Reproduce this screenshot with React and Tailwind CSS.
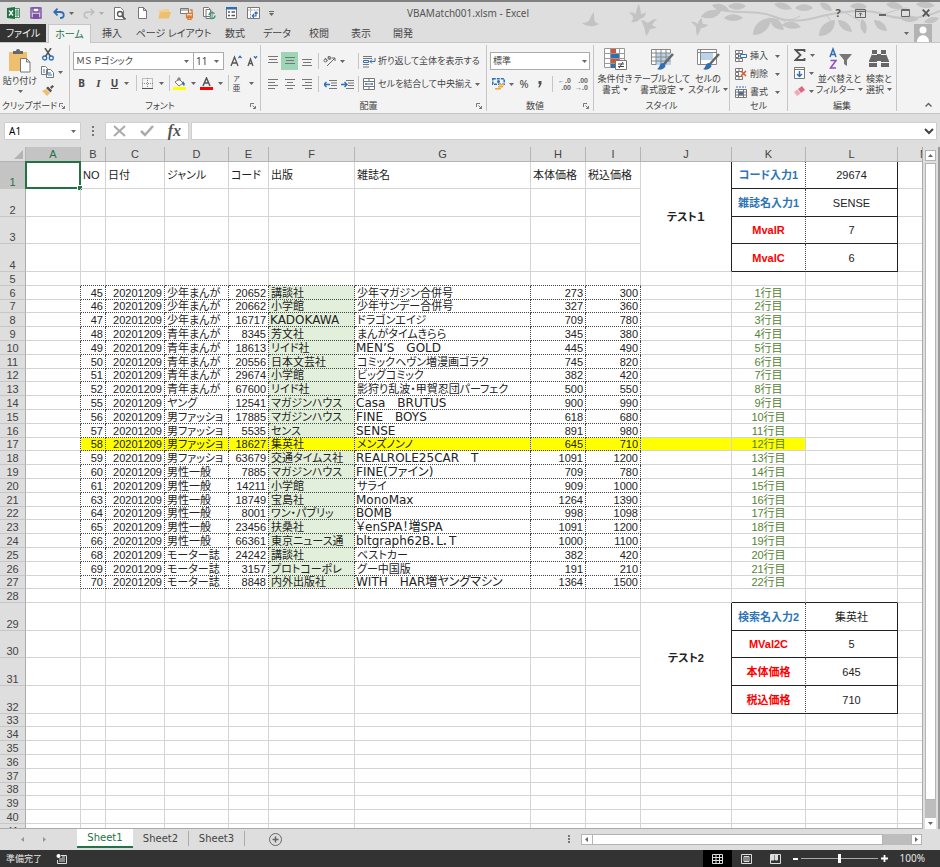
import React, { useState } from 'react';

const COLUMNS = [
    { name: 'A', width: 'w-[55px]' },
    { name: 'B', width: 'w-[25px]' },
    { name: 'C', width: 'w-[59px]' },
    { name: 'D', width: 'w-[64px]' },
    { name: 'E', width: 'w-[40px]' },
    { name: 'F', width: 'w-[86px]' },
    { name: 'G', width: 'w-[176px]' },
    { name: 'H', width: 'w-[55px]' },
    { name: 'I', width: 'w-[55px]' },
    { name: 'J', width: 'w-[91px]' },
    { name: 'K', width: 'w-[74px]' },
    { name: 'L', width: 'w-[92px]' },
    { name: 'M', width: '' },
];

const HEADINGS = {
    B: 'NO', C: '日付', D: 'ジャンル', E: 'コード', F: '出版', G: '雑誌名', H: '本体価格', I: '税込価格',
};

// no, genre, code, publisher, title, price, price with tax
const MAGAZINES = [
    [45, '少年まんが', 20652, '講談社', '少年マガジン合併号', 273, 300],
    [46, '少年まんが', 20662, '小学館', '少年サンデー合併号', 327, 360],
    [47, '少年まんが', 16717, 'KADOKAWA', 'ドラゴンエイジ', 709, 780],
    [48, '青年まんが', 8345, '芳文社', 'まんがタイムきらら', 345, 380],
    [49, '青年まんが', 18613, 'リイド社', 'MEN’S　GOLD', 445, 490],
    [50, '青年まんが', 20556, '日本文芸社', 'コミックヘヴン増漫画ゴラク', 745, 820],
    [51, '青年まんが', 29674, '小学館', 'ビッグコミック', 382, 420],
    [52, '青年まんが', 67600, 'リイド社', '影狩り乱波・甲賀忍団パーフェク', 500, 550],
    [55, 'ヤング', 12541, 'マガジンハウス', 'Casa　BRUTUS', 900, 990],
    [56, '男ファッショ', 17885, 'マガジンハウス', 'FINE　BOYS', 618, 680],
    [57, '男ファッショ', 5535, 'センス', 'SENSE', 891, 980],
    [58, '男ファッショ', 18627, '集英社', 'メンズノンノ', 645, 710],
    [59, '男ファッショ', 63679, '交通タイムス社', 'REALROLE25CAR　T', 1091, 1200],
    [60, '男性一般', 7885, 'マガジンハウス', 'FINE(ファイン)', 709, 780],
    [61, '男性一般', 14211, '小学館', 'サライ', 909, 1000],
    [63, '男性一般', 18749, '宝島社', 'MonoMax', 1264, 1390],
    [64, '男性一般', 8001, 'ワン・パブリッ', 'BOMB', 998, 1098],
    [65, '男性一般', 23456, '扶桑社', '￥enSPA！増SPA', 1091, 1200],
    [66, '男性一般', 66361, '東京ニュース通', 'bltgraph62B．L．T', 1000, 1100],
    [68, 'モーター誌', 24242, '講談社', 'ベストカー', 382, 420],
    [69, 'モーター誌', 3157, 'プロトコーポレ', 'グー中国版', 191, 210],
    [70, 'モーター誌', 8848, '内外出版社', 'WITH　HAR増ヤングマシン', 1364, 1500],
];

const RESULTS = {
    1: ['コード入力1', '29674', 'text-[#2e75b6]'],
    2: ['雑誌名入力1', 'SENSE', 'text-[#2e75b6]'],
    3: ['MvalR', '7', 'text-[#ff0000]'],
    4: ['MvalC', '6', 'text-[#ff0000]'],
    29: ['検索名入力2', '集英社', 'text-[#2e75b6]'],
    30: ['MVal2C', '5', 'text-[#ff0000]'],
    31: ['本体価格', '645', 'text-[#ff0000]'],
    32: ['税込価格', '710', 'text-[#ff0000]'],
};

const ROW_COUNT = 41;
const FIRST_DATA_ROW = 6;
const LAST_DATA_ROW = 27;
const HIGHLIGHT_ROW = 17;

const isTall = (row) => row <= 4 || (row >= 29 && row <= 32);

// Rows are 13.8 units high, snapped to whole pixels
const buildRowHeights = () => {
    const heights = [];
    let units = 0;
    for (let row = 1; row <= ROW_COUNT; row++) {
        const next = units + (isTall(row) ? 2 : 1);
        heights[row] = Math.floor(next * 13.8) - Math.floor(units * 13.8);
        units = next;
    }
    return heights;
};

const rowHeights = buildRowHeights();

const getCellValue = (col, row) => {
    if (row === 1 && HEADINGS[col]) return HEADINGS[col];
    if (row >= FIRST_DATA_ROW && row <= LAST_DATA_ROW) {
        const [no, genre, code, publisher, title, price, taxed] = MAGAZINES[row - FIRST_DATA_ROW];
        const values = { B: no, C: 20201209, D: genre, E: code, F: publisher, G: title, H: price, I: taxed, K: `${row - 5}行目` };
        return values[col];
    }
    if (RESULTS[row] && col === 'K') return RESULTS[row][0];
    if (RESULTS[row] && col === 'L') return RESULTS[row][1];
    return null;
};

const getCellClass = (col, row) => {
    const inData = row >= FIRST_DATA_ROW && row <= LAST_DATA_ROW;
    const classes = ['relative whitespace-nowrap border-r border-b p-0'];

    // bottom edge
    if (col >= 'B' && col <= 'I' && row >= 5 && row <= LAST_DATA_ROW) {
        classes.push('[border-bottom-style:dotted] border-b-[#444]');
    } else if ((col === 'K' || col === 'L') && (RESULTS[row] || row === 28)) {
        classes.push('border-b-[#222]');
    } else {
        classes.push('border-b-[#d4d4d4]');
    }

    // right edge
    if (col <= 'I' && inData) {
        classes.push('[border-right-style:dotted] border-r-[#444]');
    } else if (col === 'K' && RESULTS[row]) {
        classes.push('[border-right-style:dotted] border-r-[#444]');
    } else if ((col === 'J' || col === 'L') && RESULTS[row]) {
        classes.push('border-r-[#222]');
    } else {
        classes.push('border-r-[#d4d4d4]');
    }

    if (row === HIGHLIGHT_ROW && col >= 'B' && col <= 'K') {
        classes.push('bg-[#ffff00]');
    } else if (inData && col === 'F') {
        classes.push('bg-[#e2efda]');
    }

    const startsLatin = /^[A-Za-z￥]/.test(getCellValue(col, row) ?? '');

    if (RESULTS[row] && col === 'K') classes.push('text-center font-bold text-[11px]', RESULTS[row][2]);
    else if (RESULTS[row] && col === 'L') classes.push('text-center text-[11px]');
    else if (col === 'K') classes.push('text-center text-[11px] text-[#548235]');
    else if (row === 1) classes.push('pl-[2px] text-left text-[11px]');
    else if ('BCEHI'.includes(col)) classes.push('pr-[2px] text-right text-[11px]');
    else if (startsLatin) classes.push("pl-px text-left text-[12px] font-['DejaVu_Sans','Noto_Sans_CJK_JP',sans-serif]");
    else classes.push('pl-[2px] text-left text-[11px]');

    return classes.join(' ');
};

const Arrow = ({ className = '' }) => (
    <svg className={`shrink-0 ${className}`} width="5" height="3" viewBox="0 0 5 3" aria-hidden="true">
        <path d="M0 0h5L2.5 3z" fill="#666" />
    </svg>
);

const Separator = () => <span className="h-4 w-px shrink-0 bg-[#c6c6c6]" />;

const IconButton = ({ label, children, className = 'w-[17px]' }) => (
    <button type="button" aria-label={label} className={`flex h-[18px] shrink-0 items-center justify-center ${className}`}>
        {children}
    </button>
);

const Group = ({ label, launcher, className, children }) => (
    <section aria-label={label} className={`flex shrink-0 flex-col border-r border-[#c6c6c6] ${className}`}>
        <div className="flex h-[57px]">{children}</div>
        <div className="flex h-[10px] items-center">
            <span className="flex-1 text-center leading-[10px] whitespace-nowrap">{label}</span>
            {launcher && (
                <button type="button" aria-label={`${label}の設定`} className="mr-1">
                    <svg width="6" height="6" viewBox="0 0 6 6" fill="none" stroke="#777">
                        <path d="M.5 4V.5H4M2.500 2.500l3 3M5.500 3v2.500H3" />
                    </svg>
                </button>
            )}
        </div>
    </section>
);

const BigButton = ({ lines, icon, className }) => (
    <button type="button" className={`flex shrink-0 flex-col items-center pt-[2px] whitespace-nowrap ${className}`}>
        {icon}
        <span className="mt-[2px] leading-[11px]">{lines[0]}</span>
        <span className="flex items-center gap-[3px] leading-[11px]">
            {lines[1]}
            <Arrow />
        </span>
    </button>
);

const Lines = ({ rows }) => (
    <svg width="12" height="10" viewBox="0 0 12 10" stroke="#777" aria-hidden="true">
        {rows.map(([x1, x2, y]) => <path key={y} d={`M${x1} ${y}H${x2}`} />)}
    </svg>
);

/* ---------- Title bar ---------- */

const Branches = () => (
    <svg className="pointer-events-none absolute top-0 right-0" width="360" height="40" viewBox="580 2 360 40" fill="#c3c3c3" aria-hidden="true">
        <path d="M582 23c4 0 6-1 8-4 1-3 2-5 4-7 0 4 0 7 1 10 1 1 3 1 4 2-3 1-5 3-9 2-3 0-6-1-8-3z" />
        <path d="M629 13c3-1 5 0 7 1 0-4 1-7 3-10 1 4 2 7 2 10 2 0 4-1 5-2 0 4-3 6-6 7-2 2-5 4-9 3 2-2 2-3 2-5-1-2-2-3-4-4z" />
        <path d="M641 20c3 0 5 2 7 3 2-2 5-4 9-4-2 2-4 4-5 6 2 1 3 2 5 2-3 2-5 2-7 2-1 3-2 5-4 7-1-4-1-6-2-9-1-3-2-5-3-7z" />
        <path d="M691 22c3-1 5 1 7 2 0-3 2-5 4-6 0 3 0 4 1 6 2 0 3 0 5 1-2 2-4 3-7 3-1 3-2 5-4 8-1-4-1-6-1-9-1-2-3-3-5-5z" />
        <g fill="none" stroke="#c6c6c6">
            <path d="M716 8c18 8 36 0 56 8s34 4 50 0 44-8 60-2 38 6 58-3" strokeWidth="2" />
            <path d="M770 15c10 2 16 8 20 10M842 11c8 4 14 8 18 10M800 16c-8 6-24 4-32 2M884 14c8-2 16-6 24-6M826 15c4 4 6 8 8 10" />
        </g>
        <path d="M701 17c3-6 12-9 20-6-3 7-12 9-20 6zM712 5c7-3 14 0 17 5-7 3-14 0-17-5zM728 6c5-4 13-4 18 0-5 5-13 5-18 0zM724 18c5-5 13-5 19 0-6 4-14 4-19 0z" />
        <path d="M753 35c0-10 8-17 18-17 0 10-8 17-18 17zM770 18c8 0 13 5 14 12-9 0-14-5-14-12zM782 25c6-5 14-4 19 2-7 3-14 2-19-2zM774 4c7-3 14-1 18 5-7 2-14 0-18-5z" />
        <path d="M795 8c5-5 13-5 18 0-5 4-13 4-18 0zM820 3c7-1 11 2 12 8-7 0-11-3-12-8zM819 36c0-9 6-15 16-16 0 10-6 16-16 16zM838 20c8 0 13 5 14 12-9-1-13-5-14-12z" />
        <path d="M850 6c5-4 13-4 17 1-6 4-13 3-17-1zM862 19c5 3 6 9 3 15-5-4-6-10-3-15zM874 20c7 0 12 4 13 11-8 0-12-4-13-11zM886 4c6-4 14-2 17 4-7 2-13 1-17-4zM901 19c5-5 13-4 18 0-6 4-13 4-18 0zM916 4c6-4 14-3 19 2-7 3-14 3-19-2zM924 22c4-5 10-6 15-4-3 5-9 7-15 4z" />
    </svg>
);

const QuickAccess = () => (
    <div className="flex items-center pl-1">
        <IconButton label="Excel" className="w-[18px]">
            <svg width="13" height="12" viewBox="0 0 13 12">
                <path d="M7 1.500h5.500v9H7M8 4h4M8 6h4M8 8h4M10 2v8" fill="#fff" stroke="#217346" strokeWidth=".8" />
                <path d="M0 1l8-1v12l-8-1z" fill="#217346" />
                <path d="M2 3.500l4 5M6 3.500l-4 5" stroke="#fff" strokeWidth="1.300" />
            </svg>
        </IconButton>
        <IconButton label="上書き保存" className="ml-[5px] w-[18px]">
            <svg width="12" height="12" viewBox="0 0 12 12" fill="none" stroke="#7b4fa6" strokeWidth="1.400">
                <path d="M1 1h10v10H1z" />
                <path d="M3 1h6v4H3z" fill="#fff" />
                <path d="M3.500 7.500h5V11h-5z" fill="#7b4fa6" />
            </svg>
        </IconButton>
        <IconButton label="元に戻す" className="ml-1 w-[28px] gap-1">
            <svg width="12" height="11" viewBox="0 0 12 11" fill="none" stroke="#2f6eb5" strokeWidth="1.800">
                <path d="M1 4h6c5 0 5 6 0 6M4.500 .7L1.200 4l3.300 3.300" />
            </svg>
            <Arrow />
        </IconButton>
        <IconButton label="やり直し" className="ml-[2px] w-[28px] gap-1">
            <svg width="12" height="11" viewBox="0 0 12 11" fill="none" stroke="#bdbdbd" strokeWidth="1.600">
                <path d="M11 4H5c-5 0-5 6 0 6M7.500 .7L10.800 4 7.500 7.300" />
            </svg>
            <Arrow className="opacity-40" />
        </IconButton>
        <IconButton label="印刷プレビュー" className="ml-[2px] w-[22px]">
            <svg width="12" height="13" viewBox="0 0 12 13" fill="none" stroke="#777">
                <path d="M.5 .5h6l3 3v9h-9z" fill="#fff" />
                <circle cx="6" cy="7" r="2.500" strokeWidth="1.300" stroke="#555" />
                <path d="M8 9l3.500 3.500" strokeWidth="1.600" stroke="#555" />
            </svg>
        </IconButton>
        <IconButton label="新規作成" className="w-[22px]">
            <svg width="9" height="12" viewBox="0 0 9 12" fill="#fff" stroke="#777">
                <path d="M.5 .5h5l3 3v8h-8zM5.500 .5v3h3" />
            </svg>
        </IconButton>
        <IconButton label="開く" className="w-[22px]">
            <svg width="13" height="11" viewBox="0 0 13 11">
                <path d="M1 10V2h4l1-1h5v3" fill="#f3cf8f" />
                <path d="M0 10.500L3 4h10l-2 6.500z" fill="#eebf6f" />
            </svg>
        </IconButton>
        <IconButton label="印刷範囲" className="w-[23px]">
            <svg width="13" height="13" viewBox="0 0 13 13" fill="#fff">
                <path d="M.5 1.500h8v5h-8zM.5 3h8" stroke="#777" />
                <path d="M6.500 6.500h6v4h-6zM8 9h3v3.500H8zM10 3h2v3" stroke="#d97b34" strokeWidth="1.300" />
            </svg>
        </IconButton>
        <IconButton label="更新" className="w-[22px]">
            <svg width="13" height="13" viewBox="0 0 13 13" fill="#fff" stroke="#777">
                <path d="M.5 .5h5l2 2v7h-7zM3 2.500h4l2 2v7H3z" />
                <circle cx="9" cy="8.500" r="3" fill="none" stroke="#3f9c74" strokeWidth="1.400" strokeDasharray="7 2.500" />
            </svg>
        </IconButton>
        <IconButton label="フォーム" className="w-[22px]">
            <svg width="11" height="12" viewBox="0 0 11 12" fill="#fff">
                <path d="M.5 .5h10v11H.5z" stroke="#777" />
                <path d="M0 0h11v2.500H0z" fill="#2f6eb5" />
                <path d="M2 5h2M2 8.500h2M5.500 5H9M5.500 8.500H9" stroke="#555" strokeWidth="1.300" />
            </svg>
        </IconButton>
        <IconButton label="ピボット" className="w-[22px]">
            <svg width="13" height="12" viewBox="0 0 13 12" fill="#fff">
                <path d="M.5 .5h12v11H.5z" stroke="#777" />
                <path d="M.5 3h12M3.500 .5v11" stroke="#999" strokeDasharray="2 1" />
                <path d="M5.500 9h3.500V5M7 7L5.300 9 7 10.800M7.500 6.500L9 5l1.800 1.500" fill="none" stroke="#2f6eb5" strokeWidth="1.200" />
            </svg>
        </IconButton>
        <IconButton label="クイックアクセスのカスタマイズ" className="w-[14px] flex-col gap-px">
            <span className="h-px w-[5px] bg-[#666]" />
            <Arrow />
        </IconButton>
    </div>
);

const TitleBar = () => (
    <header className="flex h-[22px] items-center">
        <div className="flex-1"><QuickAccess /></div>
        <h1 className="text-[10px] text-[#555]">VBAMatch001.xlsm - Excel</h1>
        <div className="relative flex flex-1 justify-end pr-1">
            <IconButton label="ヘルプ" className="w-[22px] text-[11px] font-bold text-[#555]">?</IconButton>
            <IconButton label="リボンの表示オプション" className="w-[22px]">
                <svg width="11" height="9" viewBox="0 0 11 9" fill="none" stroke="#666">
                    <path d="M.5 .5h10v8H.5zM.5 2.500h10M5.500 7.500V4M3.800 5.500L5.500 3.800 7.200 5.500" />
                </svg>
            </IconButton>
            <IconButton label="最小化" className="w-[23px]">
                <span className="mt-1 h-[2px] w-[7px] bg-[#666]" />
            </IconButton>
            <IconButton label="最大化" className="w-[22px]">
                <svg width="9" height="8" viewBox="0 0 9 8" fill="none" stroke="#666">
                    <path d="M.5 .5h8v7h-8zM0 1.500h9" />
                </svg>
            </IconButton>
            <IconButton label="閉じる" className="w-[20px]">
                <svg width="8" height="8" viewBox="0 0 8 8" stroke="#555" strokeWidth="1.800">
                    <path d="M.7 .7l6.600 6.600M7.300 .7L.7 7.300" />
                </svg>
            </IconButton>
        </div>
    </header>
);

const MenuTabs = () => {
    const [active, setActive] = useState('ホーム');
    const tabs = ['挿入', 'ページ レイアウト', '数式', 'データ', '校閲', '表示', '開発'];

    return (
        <nav className="relative flex h-[19px] items-stretch border-b border-[#c6c6c6] text-[10px] text-[#444]">
            <button type="button" className="w-[46px] bg-[#333] text-[#f0f0f0]">ファイル</button>
            <button
                type="button"
                onClick={() => setActive('ホーム')}
                className="-mb-px ml-[2px] w-[43px] border border-b-0 border-[#c6c6c6] bg-[#f3f3f3] text-[#217346]"
            >
                ホーム
            </button>
            {tabs.map((tab) => (
                <button
                    key={tab}
                    type="button"
                    aria-pressed={active === tab}
                    onClick={() => setActive(tab)}
                    className={tab.length > 4 ? 'w-[81px]' : 'w-[42px]'}
                >
                    {tab}
                </button>
            ))}
            <div className="ml-auto flex items-center gap-[5px] pr-2">
                <Arrow />
                <svg width="18" height="18" viewBox="0 0 18 18" role="img" aria-label="アカウント">
                    <path d="M0 0h18v18H0z" fill="#b3b3b3" />
                    <circle cx="9" cy="6" r="3.500" fill="#fff" />
                    <path d="M3 18c0-9 12-9 12 0z" fill="#fff" />
                </svg>
            </div>
        </nav>
    );
};

/* ---------- Ribbon ---------- */

const ClipboardGroup = () => (
    <Group label="クリップボード" launcher className="w-[70px]">
        <button type="button" className="flex w-[40px] flex-col items-center pt-1 whitespace-nowrap">
            <svg width="22" height="24" viewBox="0 0 22 24">
                <path d="M0 3h18v19H0z" fill="#eebf6f" />
                <path d="M4 5V2h3a2 2 0 014 0h3v3z" fill="#666" />
                <path d="M11.500 9.500h6l3.500 3.500v10h-9.500zM17.500 9.500V13H21" fill="#fff" stroke="#777" />
            </svg>
            <span className="mt-[2px] leading-[11px]">貼り付け</span>
            <Arrow className="mt-1" />
        </button>
        <div className="flex flex-col">
            <IconButton label="切り取り" className="w-[15px]">
                <svg width="12" height="13" viewBox="0 0 12 13" fill="none">
                    <path d="M3 0l5.500 8.500M9 0L3.500 8.500" stroke="#555" strokeWidth="1.500" />
                    <circle cx="2.700" cy="10" r="2" stroke="#2f6eb5" strokeWidth="1.300" />
                    <circle cx="9.300" cy="10" r="2" stroke="#2f6eb5" strokeWidth="1.300" />
                </svg>
            </IconButton>
            <IconButton label="コピー" className="w-[24px] gap-1">
                <svg width="13" height="12" viewBox="0 0 13 12" fill="#fff" stroke="#777">
                    <path d="M.5 .5h4l2 2v6h-6zM5.500 3.500h4l3 3v5h-7z" />
                    <path d="M2 4h2M2 6h2M7 7h3M7 9h4" stroke="#2f6eb5" />
                </svg>
                <Arrow />
            </IconButton>
            <IconButton label="書式のコピー" className="w-[15px]">
                <svg width="12" height="11" viewBox="0 0 12 11">
                    <path d="M0 6l4-2 4 4-3 3z" fill="#eebf6f" />
                    <path d="M4 3l2-1.500 4 4-1.500 2zM8 2l2.500-2L12 1.500 9.500 4z" fill="#555" />
                </svg>
            </IconButton>
        </div>
    </Group>
);

const FontGroup = () => (
    <Group label="フォント" launcher className="w-[191px]">
        <div className="flex flex-1 flex-col pt-[7px] pl-[3px]">
            <div className="flex items-center">
                <label className="flex h-[18px] w-[121px] items-center border border-[#ababab] bg-white pr-1">
                    <select aria-label="フォント名" className="h-full flex-1 appearance-none bg-transparent pl-[2px]">
                        <option>ＭＳ Ｐゴシック</option>
                    </select>
                    <Arrow />
                </label>
                <label className="-ml-px flex h-[18px] w-[31px] items-center border border-[#ababab] bg-white pr-1">
                    <select aria-label="フォント サイズ" className="h-full w-0 flex-1 appearance-none bg-transparent pl-[2px] text-[10px]">
                        <option>11</option>
                    </select>
                    <Arrow />
                </label>
                <IconButton label="フォント サイズの拡大" className="ml-1 w-[15px]">
                    <svg width="12" height="12" viewBox="0 0 12 12" fill="none" stroke="#555" strokeWidth="1.300">
                        <path d="M1 11l3.500-9L8 11M2.300 8h4.400" />
                        <path d="M8.500 3L10 1.300 11.500 3" stroke="#2f6eb5" />
                    </svg>
                </IconButton>
                <IconButton label="フォント サイズの縮小" className="w-[17px]">
                    <svg width="12" height="12" viewBox="0 0 12 12" fill="none" stroke="#555" strokeWidth="1.300">
                        <path d="M2 11l2.500-7L7 11M3 8.500h3" />
                        <path d="M8 1.300L9.500 3 11 1.300" stroke="#2f6eb5" />
                    </svg>
                </IconButton>
            </div>
            <div className="mt-1 flex items-center">
                <IconButton label="太字"><b className="text-[10px]">B</b></IconButton>
                <IconButton label="斜体"><i className="font-['Liberation_Serif',serif] text-[11px] font-bold">I</i></IconButton>
                <IconButton label="下線" className="w-[26px] gap-[6px]"><u className="text-[10px] font-bold">U</u><Arrow /></IconButton>
                <span className="ml-[3px]" /><Separator />
                <IconButton label="罫線" className="w-[32px] gap-[6px]">
                    <svg width="11" height="11" viewBox="0 0 11 11" fill="none" stroke="#888">
                        <path d="M.5 .5h10v10H.5zM5.500 0v11M0 5.500h11" strokeDasharray="1 1" />
                        <path d="M0 10.500h11" stroke="#555" />
                    </svg>
                    <Arrow />
                </IconButton>
                <Separator />
                <IconButton label="塗りつぶしの色" className="w-[29px] gap-[5px]">
                    <svg width="13" height="13" viewBox="0 0 13 13">
                        <path d="M2 5l4-3 4 4-4 3z" fill="#fff" stroke="#777" />
                        <path d="M5 4V1h2v3" fill="none" stroke="#777" />
                        <path d="M10 4l2 3-1 2-2-2z" fill="#2f6eb5" />
                        <path d="M0 10h13v3H0z" fill="#ffff00" />
                    </svg>
                    <Arrow />
                </IconButton>
                <IconButton label="フォントの色" className="w-[25px] gap-[5px]">
                    <svg width="13" height="13" viewBox="0 0 13 13">
                        <path d="M3 9l3.500-8L10 9M4.500 6h4" fill="none" stroke="#555" strokeWidth="1.500" />
                        <path d="M0 10h13v3H0z" fill="#ff0000" />
                    </svg>
                    <Arrow />
                </IconButton>
                <span className="ml-1" /><Separator />
                <IconButton label="ふりがな" className="w-[28px] gap-[8px]">
                    <span className="flex flex-col items-center">
                        <span className="text-[7px] leading-[8px]">ア</span>
                        <span className="text-[8px] leading-[9px]">亜</span>
                    </span>
                    <Arrow />
                </IconButton>
            </div>
        </div>
    </Group>
);

const AlignmentGroup = () => (
    <Group label="配置" launcher className="w-[226px]">
        <div className="flex flex-1 flex-col pt-[7px] pl-[3px] whitespace-nowrap">
            <div className="flex items-center">
                <IconButton label="上揃え"><Lines rows={[[1, 11, 0.5], [2, 10, 3.5], [1, 11, 6.5]]} /></IconButton>
                <IconButton label="上下中央揃え" className="w-[17px] bg-[#9fd5b7]"><Lines rows={[[1, 11, 1.5], [2, 10, 4.5], [1, 11, 7.5]]} /></IconButton>
                <IconButton label="下揃え"><Lines rows={[[1, 11, 3.5], [2, 10, 6.5], [1, 11, 9.5]]} /></IconButton>
                <span className="ml-[3px]" /><Separator />
                <IconButton label="方向" className="w-[29px] gap-1">
                    <svg width="13" height="12" viewBox="0 0 13 12" fill="none" stroke="#666">
                        <path d="M4 11l8-8M12 6V3H9" />
                        <circle cx="2.500" cy="5.500" r="1.500" />
                        <path d="M2 3l2.500 3M5 1l2 3" />
                        <circle cx="6.500" cy="3" r="1.500" />
                    </svg>
                    <Arrow />
                </IconButton>
                <span className="ml-[10px]" /><Separator />
                <button type="button" className="ml-1 flex items-center gap-[2px]">
                    <svg width="13" height="13" viewBox="0 0 13 13" fill="none" stroke="#777">
                        <path d="M0 1.500h9M0 3.500h9M0 9.500h6M0 12h6" />
                        <path d="M.5 5.500h5v2h-5zM7 6.500h5V3M9 4.500L7 6.500l2 2" stroke="#2f6eb5" />
                    </svg>
                    <span>折り返して全体を表示する</span>
                </button>
            </div>
            <div className="mt-[5px] flex items-center">
                <IconButton label="左揃え"><Lines rows={[[1, 11, 0.5], [1, 8, 3.5], [1, 11, 6.5], [1, 8, 9.5]]} /></IconButton>
                <IconButton label="中央揃え"><Lines rows={[[1, 11, 0.5], [3, 9, 3.5], [1, 11, 6.5], [3, 9, 9.5]]} /></IconButton>
                <IconButton label="右揃え"><Lines rows={[[1, 11, 0.5], [4, 11, 3.5], [1, 11, 6.5], [4, 11, 9.5]]} /></IconButton>
                <span className="ml-[3px]" /><Separator />
                <IconButton label="インデントを減らす" className="ml-[3px] w-[17px]">
                    <svg width="13" height="9" viewBox="0 0 13 9" fill="none" stroke="#777">
                        <path d="M5 .5h8M7 3h6M7 5.500h6M5 8.500h8" />
                        <path d="M0 4.500h6M2.500 2L0 4.500 2.500 7" stroke="#2f6eb5" strokeWidth="1.400" />
                    </svg>
                </IconButton>
                <IconButton label="インデントを増やす">
                    <svg width="13" height="9" viewBox="0 0 13 9" fill="none" stroke="#777">
                        <path d="M5 .5h8M7 3h6M7 5.500h6M5 8.500h8" />
                        <path d="M0 4.500h6M3.500 2L6 4.500 3.500 7" stroke="#2f6eb5" strokeWidth="1.400" />
                    </svg>
                </IconButton>
                <span className="ml-[2px]" /><Separator />
                <button type="button" className="ml-1 flex items-center gap-[3px]">
                    <svg width="12" height="12" viewBox="0 0 12 12" fill="#fff" stroke="#777">
                        <path d="M.5 .5h11v11H.5zM.5 3.500h11M.5 8.500h11M6 .5v3M6 8.500v3" />
                        <path d="M2 6h8M3.500 5L2.500 6l1 1M8.500 5l1 1-1 1" stroke="#2f6eb5" />
                    </svg>
                    <span>セルを結合して中央揃え</span>
                    <Arrow />
                </button>
            </div>
        </div>
    </Group>
);

const DecimalIcon = ({ less }) => (
    <span className="grid font-['Liberation_Sans',sans-serif] text-[7px] leading-[7px] font-bold text-[#666]">
        <span className="flex items-center justify-end">
            {!less && <span className="text-[#2f6eb5]">←</span>}
            {less ? '.00' : '.0'}
        </span>
        <span className="flex items-center justify-end">
            {less && <span className="text-[#2f6eb5]">→</span>}
            {less ? '.0' : '.00'}
        </span>
    </span>
);

const NumberGroup = () => (
    <Group label="数値" launcher className="w-[107px]">
        <div className="flex flex-1 flex-col pt-[7px] pl-[3px]">
            <label className="flex h-[18px] w-[100px] items-center border border-[#ababab] bg-white pr-[2px]">
                <select aria-label="表示形式" className="h-full flex-1 appearance-none bg-transparent pl-[2px]">
                    <option>標準</option>
                </select>
                <Arrow />
            </label>
            <div className="mt-[5px] flex items-center">
                <IconButton label="通貨表示形式" className="w-[26px] gap-1">
                    <svg width="13" height="12" viewBox="0 0 13 12" fill="none">
                        <path d="M.8 .8h11.400v5.400H.8z" stroke="#2f6eb5" strokeWidth="1.500" strokeDasharray="3 1" />
                        <circle cx="6.500" cy="3.500" r="1.500" fill="#2f6eb5" />
                        <path d="M7 6h5v1.500H7zM6 8h5v1.500H6zM3 10h6v1.500H3z" fill="#eea83f" />
                    </svg>
                    <Arrow />
                </IconButton>
                <IconButton label="パーセント" className="w-[16px] text-[11px]">%</IconButton>
                <IconButton label="桁区切り" className="w-[16px]">
                    <svg width="4" height="7" viewBox="0 0 4 7" fill="#555"><path d="M.5 0h3v3L1.500 6.500H.3L1.500 3h-1z" /></svg>
                </IconButton>
                <span className="ml-1" /><Separator />
                <IconButton label="小数点以下の桁数を増やす" className="ml-1 w-[15px]"><DecimalIcon /></IconButton>
                <IconButton label="小数点以下の桁数を減らす" className="ml-[2px] w-[15px]"><DecimalIcon less /></IconButton>
            </div>
        </div>
    </Group>
);

const BrushTable = ({ small }) => (
    <svg className="shrink-0" width="24" height="24" viewBox="0 0 24 24" fill="none">
        <path d="M1.500 2.500h19v15h-19z" fill="#fff" stroke="#888" />
        <path d={small ? 'M5 6h12v7H5z' : 'M6 6h15v12H6z'} fill="#b9d3ec" />
        <path d={small ? 'M1.500 5.500h19M4.500 2.500v15' : 'M1.500 6h19M1.500 10h19M1.500 14h19M6 2.500v15M11 2.500v15M16 2.500v15'} stroke="#888" />
        <path d="M23 7l-9 10" stroke="#666" strokeWidth="2.500" />
        <path d="M7 22c3-1 2-6 6-6 3 1 3 4 1 5-2 2-5 2-7 1z" fill="#2f6eb5" />
    </svg>
);

const StyleGroup = () => (
    <Group label="スタイル" className="w-[136px]">
        <BigButton
            className="w-[42px]"
            lines={['条件付き', '書式']}
            icon={(
                <svg className="shrink-0" width="24" height="24" viewBox="0 0 24 24">
                    <path d="M1.500 1.500h20v19h-20zM1.500 6.500h20M1.500 11.500h20M1.500 16.500h20M7.500 1.500v19M16.500 1.500v19" fill="#fff" stroke="#999" />
                    <path d="M8 2h5v4H8zM8 12h8v4H8z" fill="#d9532c" />
                    <path d="M8 7h8v4H8zM8 17h4v4H8z" fill="#2f6eb5" />
                    <path d="M12.500 13.500h11v9h-11z" fill="#fff" stroke="#777" />
                    <path d="M15 17h6M15 19.500h6M20 15l-4 6" stroke="#444" />
                </svg>
            )}
        />
        <BigButton className="w-[52px]" lines={['テーブルとして', '書式設定']} icon={<BrushTable />} />
        <BigButton className="w-[40px]" lines={['セルの', 'スタイル']} icon={<BrushTable small />} />
    </Group>
);

const CellIcon = ({ kind }) => (
    <svg width="12" height="12" viewBox="0 0 12 12" fill="#fff" stroke="#777">
        {kind === 'format' ? (
            <>
                <path d="M.5 3.500h11v8H.5zM.5 6h11M.5 9h11M3.500 3.500v8M8.500 3.500v8" />
                <path d="M4 6h4v3H4z" fill="#2f6eb5" />
                <path d="M1 1h10" stroke="#2f6eb5" strokeDasharray="2 1" />
            </>
        ) : (
            <>
                <path d="M.5 .5h7v3h-7zM4 .5v3M.5 8.500h7v3h-7zM4 8.500v3M.5 4.500h3v3h-3z" />
                {kind === 'insert' && <path d="M5.500 4.500h6v3h-6zM3 6h3" stroke="#2f6eb5" />}
                {kind === 'delete' && <path d="M6 3l5 5M11 3L6 8" stroke="#d9532c" strokeWidth="1.500" />}
            </>
        )}
    </svg>
);

const CellsGroup = () => (
    <Group label="セル" className="w-[58px]">
        <div className="flex flex-1 flex-col pt-[2px] pl-[5px]">
            {[['挿入', 'insert'], ['削除', 'delete'], ['書式', 'format']].map(([text, kind]) => (
                <button key={kind} type="button" className="flex h-[18px] items-center gap-[3px]">
                    <CellIcon kind={kind} />
                    <span className="w-[22px] text-left">{text}</span>
                    <Arrow />
                </button>
            ))}
        </div>
    </Group>
);

const EditGroup = () => (
    <Group label="編集" className="w-[109px]">
        <div className="flex w-[29px] flex-col pt-px pl-[5px]">
            <IconButton label="オート SUM" className="w-[22px] gap-1">
                <svg width="12" height="12" viewBox="0 0 12 12" fill="none" stroke="#555" strokeWidth="1.800">
                    <path d="M10.500 3V1H1.500l5 5-5 5h9V9" />
                </svg>
                <Arrow />
            </IconButton>
            <IconButton label="フィル" className="w-[22px] gap-1">
                <svg width="11" height="12" viewBox="0 0 11 12" fill="#fff" stroke="#777">
                    <path d="M.5 .5h10v11H.5zM.5 2.500h10" />
                    <path d="M5.500 4v5M3 7l2.500 2.500L8 7" fill="none" stroke="#2f6eb5" strokeWidth="1.500" />
                </svg>
                <Arrow />
            </IconButton>
            <IconButton label="クリア" className="w-[22px] gap-1">
                <svg width="11" height="10" viewBox="0 0 11 10">
                    <path d="M4 3l4-3 3 4-4 3z" fill="#e0697d" />
                    <path d="M3.500 3.500l3 4L3 10 0 6z" fill="#f2a9b4" />
                </svg>
                <Arrow />
            </IconButton>
        </div>
        <BigButton
            className="w-[45px]"
            lines={['並べ替えと', 'フィルター']}
            icon={(
                <svg className="shrink-0" width="24" height="24" viewBox="0 0 24 24" fill="none">
                    <path d="M2 10l3-8 3 8M3 7.500h4" stroke="#2f6eb5" strokeWidth="1.500" />
                    <path d="M2.500 13.500H8L2.500 21H8" stroke="#8a4fc0" strokeWidth="1.500" />
                    <path d="M11 7h13l-5 6v6l-3-2v-4z" fill="#777" />
                </svg>
            )}
        />
        <BigButton
            className="w-[34px]"
            lines={['検索と', '選択']}
            icon={(
                <svg className="shrink-0" width="22" height="24" viewBox="0 0 22 24" fill="#666">
                    <path d="M4 3h5v4h4V3h5v4l3 7v6h-8v-6H9v6H1v-6l3-7z" />
                    <path d="M4 7.500h5M13 7.500h5M1 15.500h8M13 15.500h8" stroke="#f3f3f3" />
                </svg>
            )}
        />
    </Group>
);

const Ribbon = () => (
    <div className="flex h-[71px] border-b border-[#c6c6c6] bg-[#f3f3f3] pt-[2px] pb-[2px] text-[9px] text-[#444]">
        <ClipboardGroup />
        <FontGroup />
        <AlignmentGroup />
        <NumberGroup />
        <StyleGroup />
        <CellsGroup />
        <EditGroup />
        <button type="button" aria-label="リボンを折りたたむ" className="mt-auto mr-2 mb-1 ml-auto">
            <svg width="7" height="5" viewBox="0 0 7 5" fill="none" stroke="#666" strokeWidth="1.500">
                <path d="M.5 4.500l3-3 3 3" />
            </svg>
        </button>
    </div>
);

const FormulaBar = () => (
    <div className="flex h-[33px] items-center pt-px pr-[3px] pl-1 text-[10px]">
        <div className="flex h-[18px] w-[77px] items-center border border-[#cfcfcf] bg-white pr-1">
            <input aria-label="名前ボックス" defaultValue="A1" className="w-0 flex-1 pl-1 outline-none" />
            <Arrow />
        </div>
        <svg className="mx-[11px]" width="2" height="10" viewBox="0 0 2 10" stroke="#777" strokeWidth="2">
            <path d="M1 0v10" strokeDasharray="2 2" />
        </svg>
        <div className="flex h-[18px] w-[84px] items-center justify-around border border-[#cfcfcf] bg-white">
            <button type="button" aria-label="キャンセル">
                <svg width="13" height="12" viewBox="0 0 13 12" stroke="#aaa" strokeWidth="2"><path d="M1 1l11 10M12 1L1 11" /></svg>
            </button>
            <button type="button" aria-label="入力">
                <svg width="14" height="12" viewBox="0 0 14 12" fill="none" stroke="#aaa" strokeWidth="2.500"><path d="M1 6l4 4 8-9" /></svg>
            </button>
            <button type="button" aria-label="関数の挿入" className="font-['Liberation_Serif',serif] text-[16px] leading-[16px] font-bold text-[#555] italic">fx</button>
        </div>
        <div className="ml-[2px] flex h-[18px] flex-1 items-center border border-[#cfcfcf] bg-white pr-[2px]">
            <input aria-label="数式バー" className="h-full flex-1 outline-none" />
            <button type="button" aria-label="数式バーの展開">
                <svg width="10" height="7" viewBox="0 0 10 7" fill="none" stroke="#444" strokeWidth="2"><path d="M1 1l4 4 4-4" /></svg>
            </button>
        </div>
    </div>
);

/* ---------- Sheet ---------- */

const Sheet = () => {
    const rows = Array.from({ length: ROW_COUNT }, (_, i) => i + 1);

    const renderCell = (col, row) => {
        if (col === 'J' && (row === 1 || row === 29)) {
            return (
                <td key={col} rowSpan={4} className="border-r border-b border-r-[#222] border-b-[#d4d4d4] p-0 text-center text-[11px] font-bold">
                    {row === 1 ? 'テスト１' : 'テスト2'}
                </td>
            );
        }
        if (col === 'J' && isTall(row)) return null;

        return (
            <td key={col} className={getCellClass(col, row)}>
                {getCellValue(col, row)}
                {col === 'A' && row === 1 && (
                    <span className="absolute -inset-px border-2 border-[#217346]">
                        <span className="absolute -right-[3px] -bottom-[3px] h-[5px] w-[5px] border-t border-l border-white bg-[#217346]" />
                    </span>
                )}
            </td>
        );
    };

    return (
        <div className="h-full min-w-0 flex-1 overflow-hidden border-r border-b border-[#ababab] bg-white">
            <table className="w-full min-w-[952px] table-fixed border-separate border-spacing-0 font-['Liberation_Sans','Noto_Sans_CJK_JP',sans-serif] leading-[12px] text-[#222]">
                <colgroup>
                    <col className="w-[26px]" />
                    {COLUMNS.map((col) => <col key={col.name} className={col.width} />)}
                </colgroup>
                <thead>
                    <tr className="h-[15px] bg-[#dedede] text-[11px] text-[#444]">
                        <th className="border-r border-b border-[#b4b4b4] p-0">
                            <svg className="ml-auto mr-[2px]" width="9" height="9" viewBox="0 0 9 9"><path d="M9 0v9H0z" fill="#b4b4b4" /></svg>
                        </th>
                        {COLUMNS.map((col) => (
                            <th
                                key={col.name}
                                scope="col"
                                className={`border-r border-b border-[#b4b4b4] p-0 font-normal ${col.name === 'A' ? 'bg-[#c4c4c4] text-[#217346]' : ''}`}
                            >
                                {col.name}
                            </th>
                        ))}
                    </tr>
                </thead>
                <tbody>
                    {rows.map((row) => (
                        <tr key={row} style={{ height: rowHeights[row] }}>
                            <th
                                scope="row"
                                className={`border-r border-b border-r-[#ababab] border-b-[#c6c6c6] p-0 text-center align-bottom text-[11px] font-normal ${row === 1 ? 'bg-[#c4c4c4] text-[#217346]' : 'bg-[#dedede] text-[#444]'}`}
                            >
                                {row}
                            </th>
                            {COLUMNS.map((col) => renderCell(col.name, row))}
                        </tr>
                    ))}
                </tbody>
            </table>
        </div>
    );
};

const VerticalScroll = () => (
    <div className="flex w-[17px] flex-col items-center border-r-2 border-[#999] pt-[3px]">
        <button type="button" aria-label="上へ" className="flex h-[11px] w-[11px] items-center justify-center border border-[#b4b4b4] bg-white">
            <Arrow className="rotate-180" />
        </button>
        <div className="mt-[2px] w-[11px] flex-1 border border-[#b4b4b4] bg-white" />
        <div className="h-[18px] w-[11px] bg-[#bdbdbd]" />
        <button type="button" aria-label="下へ" className="flex h-[11px] w-[11px] items-center justify-center bg-white"><Arrow /></button>
    </div>
);

const SheetTabs = () => {
    const [sheet, setSheet] = useState('Sheet1');

    return (
        <div className="flex h-[21px] items-center pr-[18px]">
            <div className="flex w-[77px] gap-[17px] pl-5">
                <button type="button" aria-label="前のシート"><Arrow className="rotate-90 opacity-60" /></button>
                <button type="button" aria-label="次のシート"><Arrow className="-rotate-90 opacity-60" /></button>
            </div>
            <div className="flex h-full items-start font-['DejaVu_Sans',sans-serif] text-[10px] text-[#444]">
                {['Sheet1', 'Sheet2', 'Sheet3'].map((name) => (
                    <button
                        key={name}
                        type="button"
                        onClick={() => setSheet(name)}
                        className={name === sheet
                            ? 'h-[19px] w-[56px] border-b-2 border-[#217346] bg-white text-[#217346]'
                            : 'mt-[2px] h-[15px] w-[56px] border-r border-[#ababab]'}
                    >
                        {name}
                    </button>
                ))}
            </div>
            <button type="button" aria-label="新しいシート" className="ml-6">
                <svg width="13" height="13" viewBox="0 0 13 13" fill="none" stroke="#666">
                    <circle cx="6.500" cy="6.500" r="6" />
                    <path d="M3.500 6.500h6M6.500 3.500v6" strokeWidth="1.600" />
                </svg>
            </button>
            <svg className="mr-[11px] ml-auto" width="2" height="9" viewBox="0 0 2 9" stroke="#777" strokeWidth="2">
                <path d="M1 0v9" strokeDasharray="2 1" />
            </svg>
            <div className="flex h-[11px] w-[37%] items-stretch bg-[#bdbdbd]">
                <button type="button" aria-label="左へ" className="flex w-[12px] items-center justify-center border border-[#b4b4b4] bg-white"><Arrow className="rotate-90" /></button>
                <div className="flex-1 border border-l-0 border-[#b4b4b4] bg-white" />
                <div className="w-[28px]" />
                <button type="button" aria-label="右へ" className="flex w-[11px] items-center justify-center border border-[#b4b4b4] bg-white"><Arrow className="-rotate-90" /></button>
            </div>
        </div>
    );
};

const StatusBar = () => (
    <footer className="flex h-[17px] items-center bg-[#333] pl-[6px] text-[9px] text-[#e6e6e6]">
        <span>準備完了</span>
        <button type="button" aria-label="マクロの記録" className="ml-[14px]">
            <svg width="11" height="10" viewBox="0 0 11 10" fill="none" stroke="#ddd">
                <path d="M5 1.500h5.500v8h-9V6M3 5h6M3 7h6M6 3h3" />
                <circle cx="2.500" cy="2" r="2" fill="#fff" stroke="none" />
            </svg>
        </button>
        <div className="ml-auto flex h-full items-center">
            <button type="button" aria-label="標準" className="flex h-full w-[29px] items-center justify-center bg-black">
                <svg width="11" height="10" viewBox="0 0 11 10" fill="none" stroke="#ddd"><path d="M.5 .5h10v9H.5zM.5 3.500h10M.5 6.500h10M4 .5v9M7.500 .5v9" /></svg>
            </button>
            <button type="button" aria-label="ページ レイアウト" className="flex w-[29px] justify-center">
                <svg width="11" height="10" viewBox="0 0 11 10" fill="none" stroke="#ddd"><path d="M.5 .5h10v9H.5zM3 2.500h5v5H3zM4 4h3M4 6h3" /></svg>
            </button>
            <button type="button" aria-label="改ページ プレビュー" className="flex w-[29px] justify-center">
                <svg width="11" height="10" viewBox="0 0 11 10" fill="none" stroke="#ddd"><path d="M.5 .5h10v9H.5z" /><path d="M1 1h3v5H1zM5.500 1h2v5h-2z" fill="#ddd" /></svg>
            </button>
            <button type="button" aria-label="縮小" className="ml-[3px] h-[2px] w-[5px] bg-white" />
            <input
                type="range"
                aria-label="ズーム"
                defaultValue="50"
                className="mx-[3px] h-[9px] w-[77px] appearance-none bg-transparent [&::-webkit-slider-runnable-track]:h-px [&::-webkit-slider-runnable-track]:bg-[#aaa] [&::-webkit-slider-thumb]:-mt-1 [&::-webkit-slider-thumb]:h-[9px] [&::-webkit-slider-thumb]:w-[3px] [&::-webkit-slider-thumb]:appearance-none [&::-webkit-slider-thumb]:bg-white"
            />
            <button type="button" aria-label="拡大">
                <svg width="7" height="7" viewBox="0 0 7 7" stroke="#fff" strokeWidth="1.800"><path d="M0 3.500h7M3.500 0v7" /></svg>
            </button>
            <span className="mr-[15px] ml-3 text-[10px]">100%</span>
        </div>
    </footer>
);

const App = () => (
    <div className="relative flex h-screen flex-col overflow-hidden border-t-2 border-[#808080] bg-[#dedede] font-['Noto_Sans','Noto_Sans_CJK_JP',sans-serif] [font-feature-settings:'palt']">
        <Branches />
        <TitleBar />
        <MenuTabs />
        <Ribbon />
        <FormulaBar />
        <main className="flex min-h-0 flex-1">
            <Sheet />
            <VerticalScroll />
        </main>
        <SheetTabs />
        <StatusBar />
    </div>
);

export default App;
